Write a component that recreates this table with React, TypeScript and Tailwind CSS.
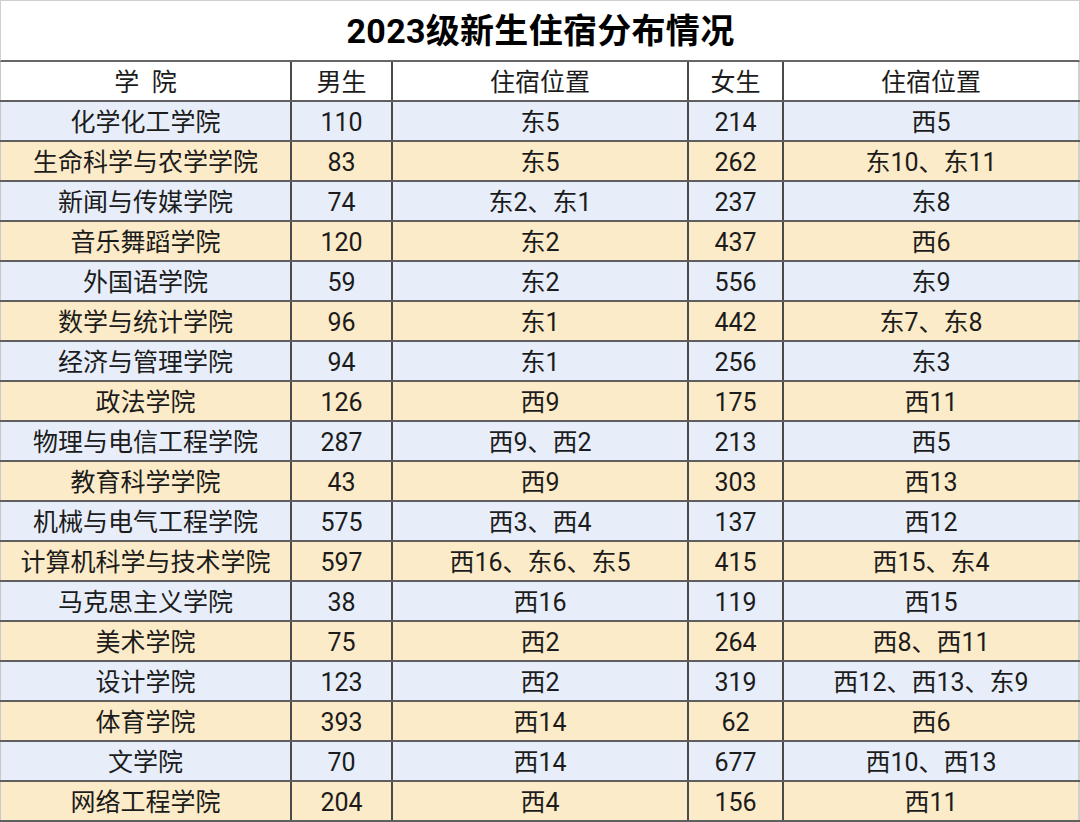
const rows: [string, string, string, string, string][] = [
  ["化学化工学院", "110", "东5", "214", "西5"],
  ["生命科学与农学学院", "83", "东5", "262", "东10、东11"],
  ["新闻与传媒学院", "74", "东2、东1", "237", "东8"],
  ["音乐舞蹈学院", "120", "东2", "437", "西6"],
  ["外国语学院", "59", "东2", "556", "东9"],
  ["数学与统计学院", "96", "东1", "442", "东7、东8"],
  ["经济与管理学院", "94", "东1", "256", "东3"],
  ["政法学院", "126", "西9", "175", "西11"],
  ["物理与电信工程学院", "287", "西9、西2", "213", "西5"],
  ["教育科学学院", "43", "西9", "303", "西13"],
  ["机械与电气工程学院", "575", "西3、西4", "137", "西12"],
  ["计算机科学与技术学院", "597", "西16、东6、东5", "415", "西15、东4"],
  ["马克思主义学院", "38", "西16", "119", "西15"],
  ["美术学院", "75", "西2", "264", "西8、西11"],
  ["设计学院", "123", "西2", "319", "西12、西13、东9"],
  ["体育学院", "393", "西14", "62", "西6"],
  ["文学院", "70", "西14", "677", "西10、西13"],
  ["网络工程学院", "204", "西4", "156", "西11"],
];

const header = ["学\u2002院", "男生", "住宿位置", "女生", "住宿位置"];

function Row({ cells, bg }: { cells: string[]; bg: string }) {
  return (
    <div className={`grid grid-cols-[292px_101px_296px_95px_296px] h-[40px] border-b-2 border-[#5f5f5f] ${bg}`}>
      {cells.map((c, i) => (
        <div
          key={i}
          className={
            i === 0
              ? "flex items-center justify-center pt-[2px] border-l border-r-2 border-l-[#c8c8c8] border-r-[#4a4a4a]"
              : i === 4
                ? "flex items-center justify-center pt-[2px] border-r-2 border-r-[#cfcfcf]"
                : "flex items-center justify-center pt-[2px] border-r-2 border-r-[#4a4a4a]"
          }
        >
          {c}
        </div>
      ))}
    </div>
  );
}

export default function App() {
  return (
    <div
      className="w-[1080px] h-[822px] overflow-hidden bg-white text-[#1c1c1c] text-[25px] leading-none"
      style={{ fontFamily: 'Roboto, "Noto Sans CJK SC", sans-serif' }}
    >
      <div className="h-[62px] flex items-center justify-center border-t border-x border-[#d0d0d0] border-b-2 border-b-[#666666] pl-[1px]">
        <span className="text-[34px] font-bold text-black tracking-[0.3px]">2023级新生住宿分布情况</span>
      </div>
      <Row cells={header} bg="bg-white" />
      {rows.map((r, i) => (
        <Row key={i} cells={r} bg={i % 2 === 0 ? "bg-[#e7eef9]" : "bg-[#fcebc8]"} />
      ))}
    </div>
  );
}
